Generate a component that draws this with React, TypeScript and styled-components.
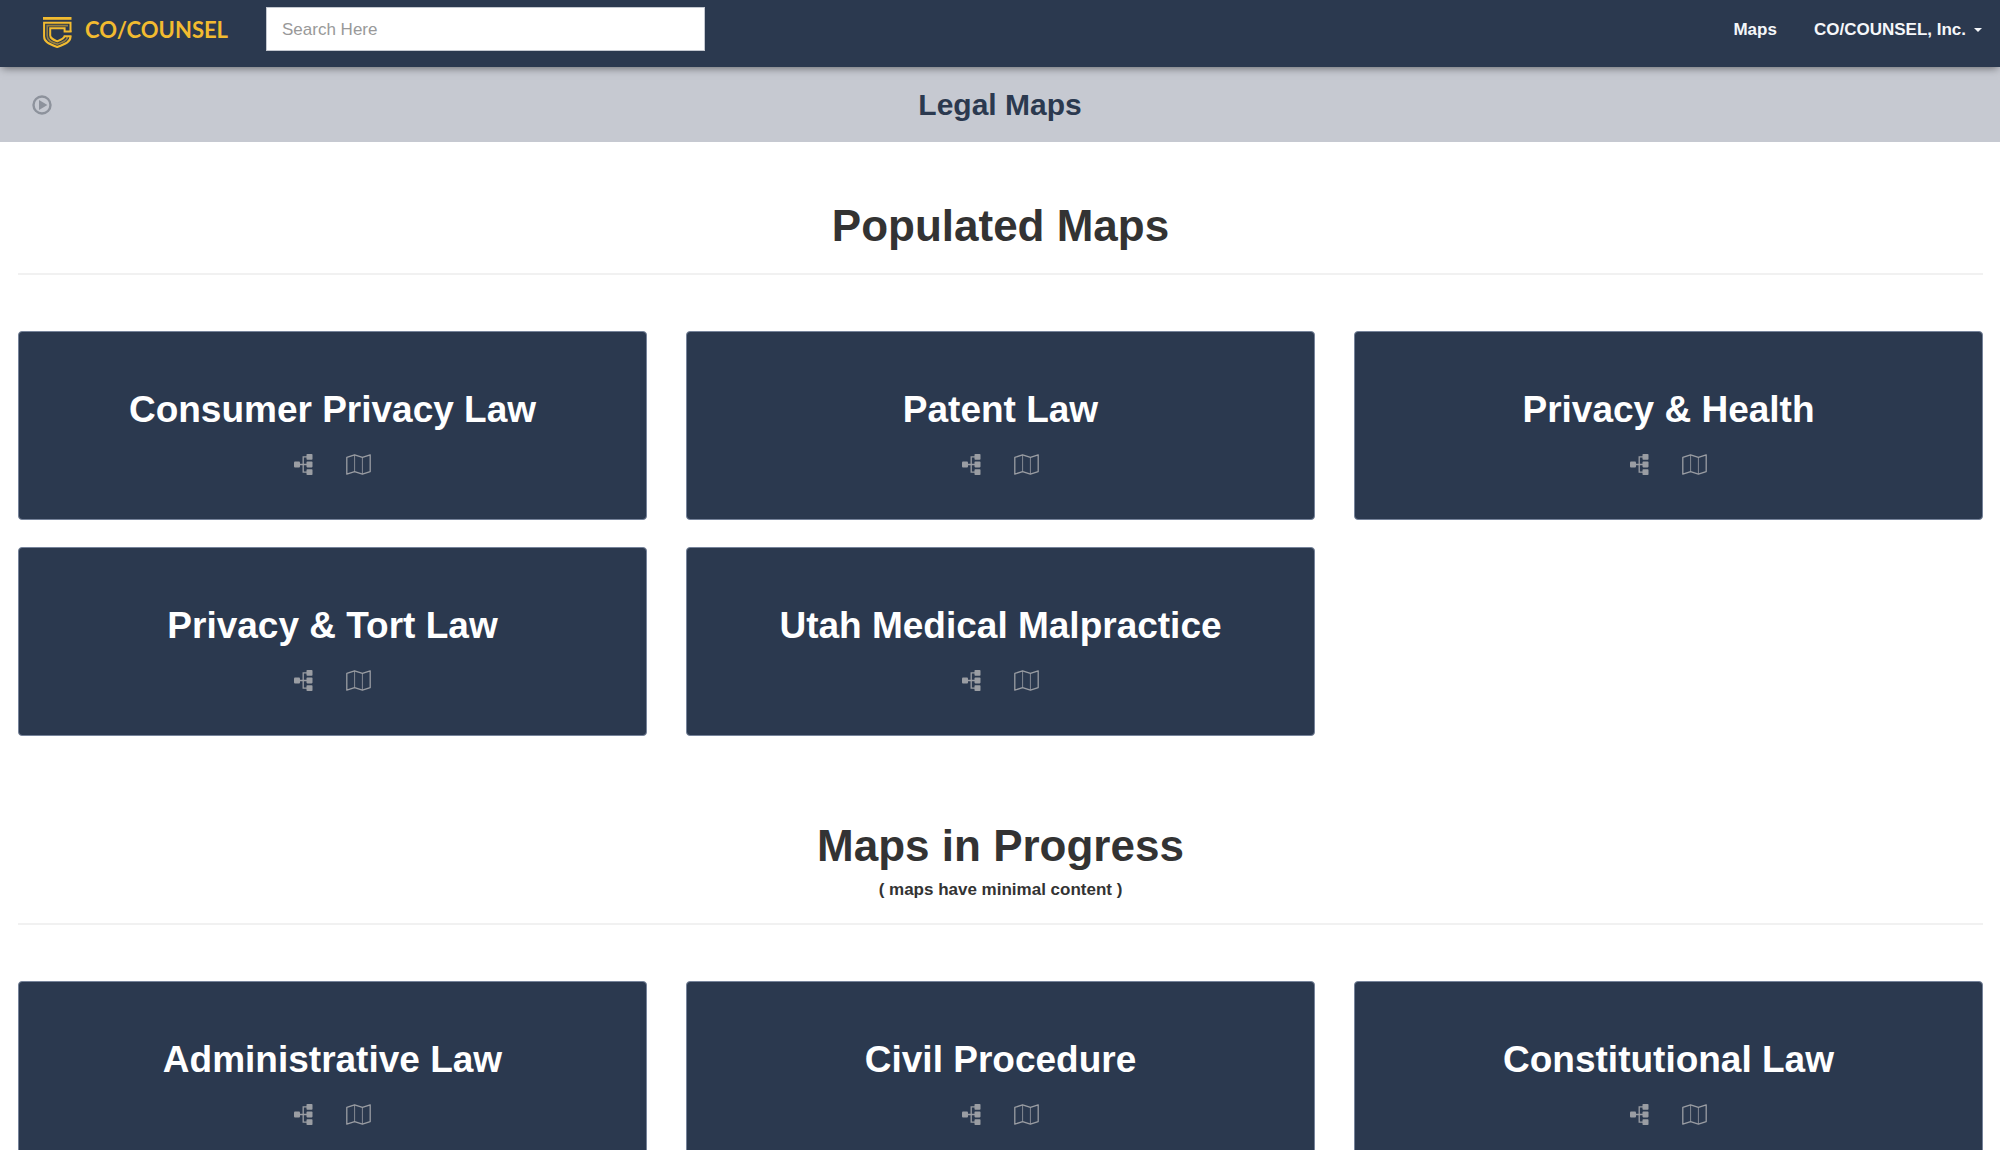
import React from "react";
import styled, { createGlobalStyle } from "styled-components";

const navy = "#2b394f";
const gold = "#f2bb30";
const sans = `"Liberation Sans", Arial, Helvetica, sans-serif`;

const GlobalStyle = createGlobalStyle`
  *, *::before, *::after { box-sizing: border-box; }
  body { margin: 0; background: #fff; color: #333; font-family: ${sans}; }
  h1, h2, h3, p { margin: 0; }
  html { overflow-x: hidden; }
`;

const Page = styled.div`
  overflow: hidden;
  min-height: 100vh;
`;

const NavBar = styled.header`
  position: relative;
  display: flex;
  align-items: flex-start;
  padding: 7px 18px 14px 43px;
  background: ${navy};
  box-shadow: 0 3px 8px -2px rgba(0, 0, 0, 0.5);
`;

const Brand = styled.a`
  display: flex;
  align-items: flex-start;
  gap: 13px;
  margin-right: 38px;
  color: ${gold};
  font: 700 22px/46px Lato, sans-serif;
  text-decoration: none;

  svg { margin-top: 10px; }
`;

const SearchBox = styled.input`
  width: 439px;
  height: 44px;
  padding: 2px 15px 0;
  border: 1px solid #c4c8d0;
  border-radius: 0;
  background: #fff;
  color: #444;
  font: 17px/24px ${sans};
  &::placeholder { color: #999; opacity: 1; }
`;

const NavLinks = styled.nav`
  display: flex;
  gap: 37px;
  margin-left: auto;
`;

const linkText = `
  color: #f5f7fa;
  font: 700 17px/46px ${sans};
`;

const NavLink = styled.a`
  ${linkText}
  text-decoration: none;
`;

const AccountButton = styled.button`
  ${linkText}
  display: flex;
  align-items: center;
  gap: 8px;
  padding: 0;
  border: 0;
  background: none;
  cursor: pointer;
`;

const Caret = styled.span`
  border: 4px solid transparent;
  border-top-color: #f5f7fa;
  border-bottom: 0;
`;

const TitleBar = styled.div`
  display: grid;
  grid-template-columns: 1fr auto 1fr;
  align-items: center;
  padding: 20px 32px 19px;
  background: #c6c9d1;
`;

const PlayButton = styled.button`
  display: flex;
  justify-self: start;
  padding: 0;
  border: 0;
  background: none;
  color: #8d929c;
  cursor: pointer;
`;

const PageTitle = styled.h1`
  color: ${navy};
  font-size: 30px;
  line-height: 36px;
`;

const Section = styled.section<{ $top: number }>`
  padding: ${(p) => p.$top}px 17px 0 18px;
`;

const SectionHead = styled.header`
  padding-bottom: 22px;
  border-bottom: 2px solid #f1f1f1;
  text-align: center;
`;

const SectionTitle = styled.h2`
  font-size: 44px;
  line-height: 50px;
`;

const SectionNote = styled.p`
  padding-top: 7px;
  font-size: 17px;
  font-weight: 700;
  line-height: 23px;
`;

const CardGrid = styled.div`
  display: grid;
  grid-template-columns: repeat(3, 1fr);
  gap: 27px 39px;
  padding-top: 56px;
`;

const Card = styled.article`
  padding: 57px 20px 44px;
  border: 1px solid #76839a;
  border-radius: 4px;
  background: ${navy};
  text-align: center;
`;

const CardTitle = styled.h3`
  color: #fff;
  font-size: 37px;
  line-height: 42px;
`;

const CardActions = styled.div`
  display: flex;
  justify-content: center;
  gap: 33px;
  padding-top: 23px;
`;

const IconLink = styled.a`
  display: flex;
  color: #9a9da3;
`;

const Shield = () => (
  <svg width="29" height="31" viewBox="0 0 29 31" fill="none" stroke={gold} strokeWidth="2" aria-hidden="true">
    <path d="M0 1.4H28.5" strokeWidth="2.8" />
    <path d="M27.5 15V5.8H1.1V19.5C1.1 25 6 27 14.2 30C22.5 27 27.5 25 27.5 19.5" />
    <path d="M25 8.6H4.2V18.8C4.2 23.4 8 24.8 14.2 27.2C20.5 24.8 24.4 23.4 24.4 19.5" strokeWidth="1.6" opacity="0.55" />
    <path d="M28.5 14.6H21.6V11.3H7.2V18.6C7.2 21.4 10 22.6 14.2 24.4C18.5 22.6 21.4 21.4 21.6 19.2H28.5" />
  </svg>
);

const PlayIcon = () => (
  <svg width="20" height="20" viewBox="0 0 20 20" aria-hidden="true">
    <circle cx="10" cy="10" r="8.5" fill="none" stroke="currentColor" strokeWidth="2.4" />
    <path d="M7 5L15.4 10L7 15Z" fill="currentColor" />
  </svg>
);

const TreeIcon = () => (
  <svg width="19" height="21" viewBox="0 0 19 21" aria-hidden="true">
    <path d="M13 2.8H9.2V18.2H13M5 10.5H13" fill="none" stroke="currentColor" strokeWidth="1.3" />
    <g fill="currentColor">
      <rect x="0" y="7.5" width="6" height="6" rx="1" />
      <rect x="12.5" y="0" width="6" height="5.8" rx="0.8" />
      <rect x="12.5" y="7.6" width="6" height="5.8" rx="0.8" />
      <rect x="12.5" y="15.2" width="6" height="5.8" rx="0.8" />
    </g>
  </svg>
);

const MapIcon = () => (
  <svg width="25" height="21" viewBox="0 0 25 21" fill="none" stroke="currentColor" strokeLinejoin="round" aria-hidden="true">
    <path d="M0.8 3.4L8.6 0.8L16.4 3.4L24.2 0.8V17.6L16.4 20.2L8.6 17.6L0.8 20.2Z" strokeWidth="1.3" />
    <path d="M8.6 0.8V17.6M16.4 3.4V20.2" strokeWidth="0.8" />
  </svg>
);

const MapCard = ({ title }: { title: string }) => (
  <Card>
    <CardTitle>{title}</CardTitle>
    <CardActions>
      <IconLink href="#" aria-label={`${title} outline`}><TreeIcon /></IconLink>
      <IconLink href="#" aria-label={`${title} map`}><MapIcon /></IconLink>
    </CardActions>
  </Card>
);

const populated = [
  "Consumer Privacy Law",
  "Patent Law",
  "Privacy & Health",
  "Privacy & Tort Law",
  "Utah Medical Malpractice",
];
const inProgress = ["Administrative Law", "Civil Procedure", "Constitutional Law"];

export default function App() {
  return (
    <Page>
      <GlobalStyle />
      <NavBar>
        <Brand href="#"><Shield />CO/COUNSEL</Brand>
        <SearchBox type="search" aria-label="Search" placeholder="Search Here" />
        <NavLinks>
          <NavLink href="#">Maps</NavLink>
          <AccountButton type="button">CO/COUNSEL, Inc.<Caret /></AccountButton>
        </NavLinks>
      </NavBar>
      <TitleBar>
        <PlayButton type="button" aria-label="Play"><PlayIcon /></PlayButton>
        <PageTitle>Legal Maps</PageTitle>
      </TitleBar>
      <main>
        <Section $top={59}>
          <SectionHead><SectionTitle>Populated Maps</SectionTitle></SectionHead>
          <CardGrid>{populated.map((t) => <MapCard key={t} title={t} />)}</CardGrid>
        </Section>
        <Section $top={85}>
          <SectionHead>
            <SectionTitle>Maps in Progress</SectionTitle>
            <SectionNote>( maps have minimal content )</SectionNote>
          </SectionHead>
          <CardGrid>{inProgress.map((t) => <MapCard key={t} title={t} />)}</CardGrid>
        </Section>
      </main>
    </Page>
  );
}
